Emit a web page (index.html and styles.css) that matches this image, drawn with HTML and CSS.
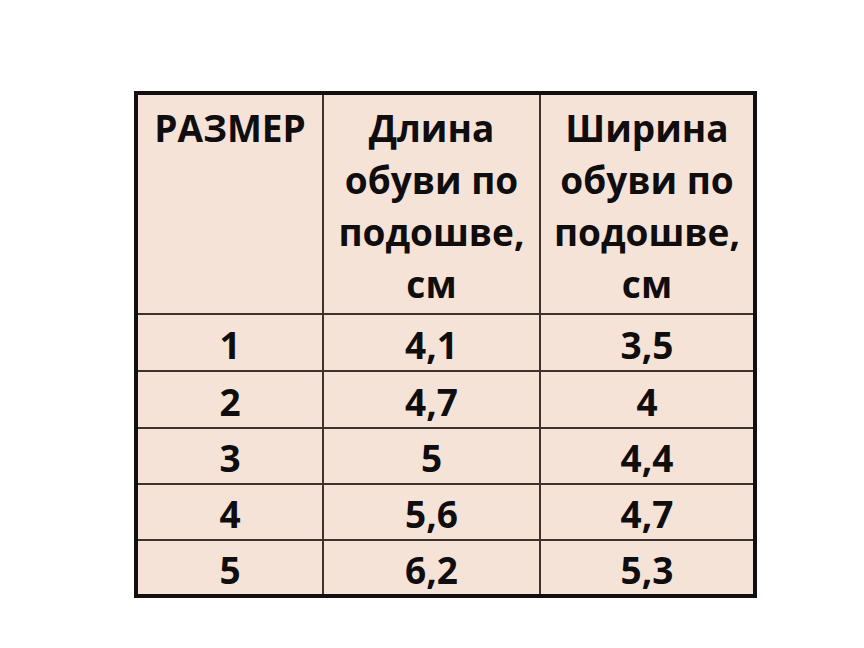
FILE: index.html
```html
<!DOCTYPE html>
<html lang="ru">
<head>
<meta charset="utf-8">
<link rel="stylesheet" href="styles.css">
</head>
<body>
<div class="page">
  <div class="sizes">
    <div class="cell head">РАЗМЕР</div>
    <div class="cell head">Длина<br>обуви по<br>подошве,<br>см</div>
    <div class="cell head">Ширина<br>обуви по<br>подошве,<br>см</div>
    <div class="cell">1</div><div class="cell">4,1</div><div class="cell">3,5</div>
    <div class="cell">2</div><div class="cell">4,7</div><div class="cell">4</div>
    <div class="cell">3</div><div class="cell">5</div><div class="cell">4,4</div>
    <div class="cell">4</div><div class="cell">5,6</div><div class="cell">4,7</div>
    <div class="cell">5</div><div class="cell">6,2</div><div class="cell">5,3</div>
  </div>
</div>
</body>
</html>
```
FILE: styles.css
```css
html, body {
  margin: 0;
  padding: 0;
  background: #ffffff;
}
.page {
  width: 864px;
  height: 648px;
  box-sizing: border-box;
  padding: 91px 0 0 134px;
}
.sizes {
  display: inline-grid;
  grid-template-columns: 184px 215px 212px;
  grid-template-rows: 218px 55px 55px 54px 54px 53px;
  gap: 2px;
  border: 4px solid #110f0f;
  background: #3f322c;
}
.cell {
  background: #f6e3d8;
  font-family: "Open Sans", "Noto Sans", sans-serif;
  font-weight: 700;
  font-size: 37px;
  line-height: 52px;
  color: #0f0d0d;
  text-align: center;
  display: flex;
  align-items: center;
  justify-content: center;
  padding-top: 4px;
  box-sizing: border-box;
}
.head {
  align-items: flex-start;
  padding-top: 7px;
}
```
